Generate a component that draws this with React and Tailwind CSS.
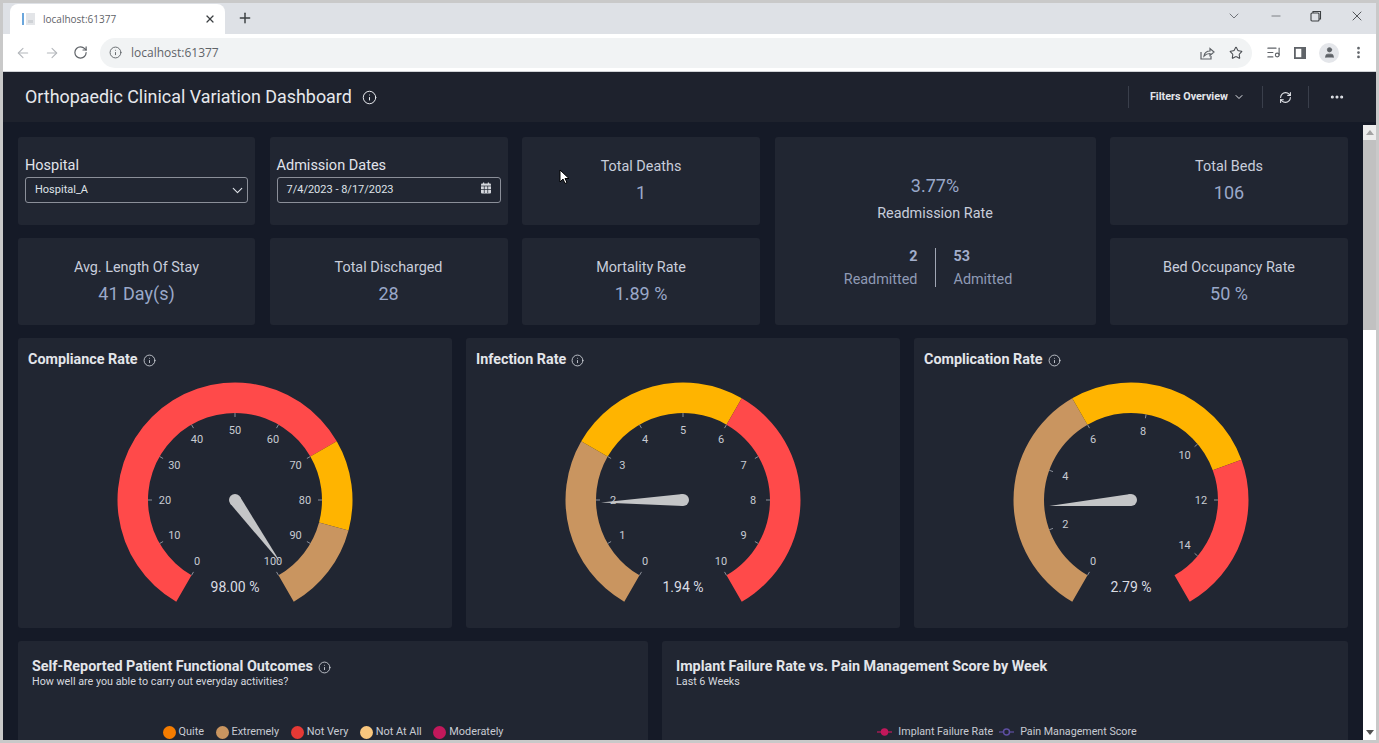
import React from "react";
import {
  ArrowLeft,
  ArrowRight,
  ChevronDown,
  Info,
  ListMusic,
  Minus,
  MoreHorizontal,
  MoreVertical,
  Plus,
  RefreshCw,
  RotateCw,
  Star,
  User,
  X,
} from "lucide-react";

const RED = "#ff4a4a";
const YELLOW = "#ffb400";
const TAN = "#c99560";

const polar = (r, deg) => {
  const a = (deg * Math.PI) / 180;
  return [130 + r * Math.cos(a), 130 - r * Math.sin(a)];
};

const arcPath = (from, to, ro, ri) => {
  const [x1, y1] = polar(ro, from);
  const [x2, y2] = polar(ro, to);
  const [x3, y3] = polar(ri, to);
  const [x4, y4] = polar(ri, from);
  const large = from - to > 180 ? 1 : 0;
  return `M${x1} ${y1}A${ro} ${ro} 0 ${large} 1 ${x2} ${y2}L${x3} ${y3}A${ri} ${ri} 0 ${large} 0 ${x4} ${y4}Z`;
};

// labels sitting 30deg off the vertical are pushed out a little in the original chart
const labelNudge = (deg) => {
  const c = Math.cos((deg * Math.PI) / 180);
  return Math.abs(Math.abs(c) - 0.5) < 0.01 ? Math.sign(c) * 3 : 0;
};

const Gauge = ({ max, step, segments, value, label, needle }) => {
  const angle = (v) => 240 - (300 * v) / max;
  const ticks = [];
  for (let v = 0; v <= max; v += step) ticks.push(v);
  const a = angle(value);
  const [tx, ty] = polar(needle, a);
  const [b1x, b1y] = polar(6, a + 90);
  const [b2x, b2y] = polar(6, a - 90);
  return (
    <svg width="260" height="240" viewBox="0 0 260 240" className="block">
      {segments.map((s) => (
        <path key={s.from} d={arcPath(angle(s.from), angle(s.to), 117.5, 87)} fill={s.color} />
      ))}
      {ticks.map((v) => {
        const [x1, y1] = polar(87, angle(v));
        const [x2, y2] = polar(83, angle(v));
        const [lx, ly] = polar(70, angle(v));
        return (
          <g key={v}>
            <line x1={x1} y1={y1} x2={x2} y2={y2} stroke="#8a8e98" strokeWidth="1" />
            <text x={lx + labelNudge(angle(v))} y={ly + 4} textAnchor="middle" fontSize="11" fill="#c8cbd2">
              {v}
            </text>
          </g>
        );
      })}
      <path d={`M${b1x} ${b1y}L${tx} ${ty}L${b2x} ${b2y}Z`} fill="#c4c5c7" />
      <circle cx="130" cy="130" r="6" fill="#c4c5c7" />
      <text x="130" y="222" textAnchor="middle" fontSize="14" fill="#d9dce3">
        {label}
      </text>
    </svg>
  );
};

const Stat = ({ label, value }) => (
  <div className="flex flex-col items-center justify-center gap-[3px] rounded-[3px] bg-[#212632] pt-px">
    <div className="text-[14.4px] leading-5 text-[#c8cddb]">{label}</div>
    <div className="text-[18px] leading-[26px] text-[#9aa8c9]">{value}</div>
  </div>
);

const GaugeCard = ({ title, ...gauge }) => (
  <div className="h-[290px] rounded-[3px] bg-[#212632] pt-[12px]">
    <div className="flex items-center gap-[5px] pl-[10px] text-[14.35px] leading-5 font-bold text-[#e3e5ea]">
      {title}
      <Info size={13} strokeWidth={1.6} className="text-[#d0d3da]" />
    </div>
    <div className="flex justify-center">
      <Gauge {...gauge} />
    </div>
  </div>
);

const LegendDot = ({ color, label }) => (
  <div className="flex items-center gap-[3px]">
    <span className="h-[13px] w-[13px] rounded-full" style={{ backgroundColor: color }} />
    <span>{label}</span>
  </div>
);

const LegendLine = ({ color, label, filled }) => (
  <div className="flex items-center gap-[6px]">
    <svg width="15" height="8" viewBox="0 0 15 8">
      <line x1="0" y1="4" x2="15" y2="4" stroke={color} strokeWidth="1.2" />
      <circle cx="7.5" cy="4" r="3" fill={filled ? color : "#212632"} stroke={color} strokeWidth="1.5" />
    </svg>
    <span>{label}</span>
  </div>
);

const ChromeBar = () => (
  <div className="shrink-0 font-['Open_Sans',sans-serif] text-[#5f6368]">
    <div className="flex h-[31px] items-end bg-[#dee1e6]">
      <div className="ml-[7px] flex h-[30px] w-[215px] items-center rounded-t-[8px] bg-white pr-[9px] pl-[12px]">
        <svg width="14" height="14" viewBox="0 0 14 14">
          <rect x="0" y="1" width="2" height="12" fill="#6aa6dc" />
          <rect x="4" y="1" width="9" height="12" fill="#e3e5e8" />
          <rect x="6" y="8" width="5" height="3" fill="#cfd2d6" />
        </svg>
        <span className="ml-[7px] flex-1 text-[10px]">localhost:61377</span>
        <X size={12} strokeWidth={2.4} className="text-[#3c4043]" />
      </div>
      <Plus size={16} strokeWidth={2.2} className="mb-[8px] ml-[12px] text-[#3c4043]" />
      <div className="mb-[10px] ml-auto flex items-center gap-[27px] pr-[11px]">
        <ChevronDown size={16} strokeWidth={1.3} />
        <Minus size={14} strokeWidth={1.3} />
        <svg width="12" height="12" viewBox="0 0 12 12" fill="none" stroke="#3c4043" strokeWidth="1.1">
          <rect x="1" y="3" width="8" height="8" rx="1" />
          <path d="M3 3V1.5h7.5V9H9" />
        </svg>
        <X size={16} strokeWidth={1.3} className="text-[#3c4043]" />
      </div>
    </div>
    <div className="flex h-[38px] items-center border-b border-[#d0d2d6] bg-white">
      <div className="flex items-center gap-[13px] pl-[12px]">
        <ArrowLeft size={16} strokeWidth={1.6} className="text-[#b4b7bc]" />
        <ArrowRight size={16} strokeWidth={1.6} className="text-[#b4b7bc]" />
        <RotateCw size={15} strokeWidth={1.9} />
      </div>
      <div className="ml-[12px] flex h-[30px] flex-1 items-center rounded-full bg-[#f1f3f4] pr-[9px] pl-[9px]">
        <Info size={13} strokeWidth={1.7} />
        <span className="ml-[9px] flex-1 text-[12px]">localhost:61377</span>
        <svg width="16" height="16" viewBox="0 0 16 16" fill="none" stroke="#5f6368" strokeWidth="1.2">
          <path d="M2 7v7h10v-3" />
          <path d="M5 11c.5-3 3-5 6-5V3.5L15 7l-4 3.5V8.5c-2.500 0-4.500 1-6 2.500z" />
        </svg>
        <Star size={14} strokeWidth={1.8} className="ml-[14px] text-[#4a4d52]" />
      </div>
      <div className="flex items-center gap-[12px] pr-[10px] pl-[14px]">
        <ListMusic size={15} strokeWidth={1.8} />
        <svg width="14" height="14" viewBox="0 0 14 14">
          <rect x="1" y="1" width="12" height="12" fill="#5f6368" />
          <rect x="2.800" y="2.800" width="5.500" height="8.400" fill="white" />
        </svg>
        <span className="flex h-[20px] w-[20px] items-center justify-center rounded-full bg-[#e4e6ea]">
          <User size={13} fill="#5f6368" strokeWidth={1.5} />
        </span>
        <MoreVertical size={15} strokeWidth={2.4} />
      </div>
    </div>
  </div>
);

const Scrollbar = () => (
  <div className="mt-[3px] flex w-[13px] shrink-0 flex-col bg-white">
    <div className="flex h-[15px] items-center justify-center bg-[#ededed]">
      <div className="h-0 w-0 border-x-[4px] border-b-[5px] border-x-transparent border-b-[#a3a3a3]" />
    </div>
    <div className="h-[190px] bg-[#c1c1c1]" />
    <div className="flex-1" />
    <div className="flex h-[15px] items-center justify-center">
      <div className="h-0 w-0 border-x-[4px] border-t-[5px] border-x-transparent border-t-[#505050]" />
    </div>
  </div>
);

const CalendarIcon = () => (
  <svg width="12" height="12" viewBox="0 0 12 12" className="mb-[4px]">
    <rect x="1" y="1.500" width="10" height="10" rx="1" fill="#d4d7dd" />
    <rect x="3" y="0.500" width="1.200" height="2" fill="#d4d7dd" />
    <rect x="7.800" y="0.500" width="1.200" height="2" fill="#d4d7dd" />
    <path d="M1 4h10M4.300 4v7M7.700 4v7M1 7.500h10" stroke="#212632" strokeWidth="0.7" />
  </svg>
);

export default function App() {
  return (
    <div className="flex h-[743px] w-[1379px] flex-col overflow-hidden bg-[#c9c9c9] px-[3px] pt-[3px] pb-[3px] font-['Roboto',sans-serif]">
      <ChromeBar />

      <div className="flex h-[50px] shrink-0 items-center bg-[#1e222d] pl-[22px]">
        <h1 className="text-[17.9px] text-[#e6e8ec]">Orthopaedic Clinical Variation Dashboard</h1>
        <Info size={15} strokeWidth={1.6} className="ml-[10px] text-[#e6e8ec]" />
        <div className="ml-auto flex h-[22px] items-center text-[#e3e5ea]">
          <div className="flex h-full items-center gap-[5px] border-l border-[#3a3f4b] pr-[17px] pl-[21px] text-[10.8px] font-bold">
            Filters Overview
            <ChevronDown size={12} strokeWidth={2} />
          </div>
          <div className="flex h-full w-[47px] items-center justify-center border-x border-[#3a3f4b]">
            <RefreshCw size={13} strokeWidth={2} />
          </div>
          <div className="flex h-full w-[55px] items-center justify-center">
            <MoreHorizontal size={16} strokeWidth={2.6} />
          </div>
        </div>
        <div className="w-[12px]" />
      </div>

      <div className="flex min-h-0 flex-1 bg-[#151a27]">
        <div className="min-w-0 flex-1 overflow-hidden pt-[15px] pl-[15px]">
          <div className="relative grid grid-cols-[237px_238px_238px_321px_238px] grid-rows-[88px_87px] gap-x-[14.5px] gap-y-[13px]">
            <div className="rounded-[3px] bg-[#212632] px-[7px] pt-[18.500px]">
              <div className="text-[14.5px] leading-5 text-[#e0e3ea]">Hospital</div>
              <div className="mt-[1.500px] flex h-[26px] items-center justify-between rounded-[3px] border border-[#8b8f99] pr-px pl-[9px] text-[11px] text-[#dfe2e8]">
                Hospital_A
                <ChevronDown size={17} strokeWidth={1.6} />
              </div>
            </div>
            <div className="rounded-[3px] bg-[#212632] px-[7px] pt-[18.500px]">
              <div className="text-[14.5px] leading-5 text-[#e0e3ea]">Admission Dates</div>
              <div className="mt-[1.500px] flex h-[26px] items-center justify-between rounded-[3px] border border-[#8b8f99] pr-[8px] pl-[9px] text-[11px] text-[#dfe2e8]">
                7/4/2023 - 8/17/2023
                <CalendarIcon />
              </div>
            </div>
            <Stat label="Total Deaths" value="1" />
            <div className="row-span-2 flex flex-col items-center rounded-[3px] bg-[#212632] pt-[36px]">
              <div className="text-[18px] leading-[26px] text-[#9aa8c9]">3.77%</div>
              <div className="mt-[5px] text-[14.4px] leading-5 text-[#c8cddb]">Readmission Rate</div>
              <div className="mt-[21px] flex w-full">
                <div className="flex w-[143px] flex-col items-end text-[14.4px] leading-[23px]">
                  <span className="font-bold text-[#a3aecb]">2</span>
                  <span className="text-[#8f9ab5]">Readmitted</span>
                </div>
                <div className="mx-[17.500px] mt-[3px] h-[39px] w-px bg-[#a0a6b4]" />
                <div className="flex flex-col text-[14.4px] leading-[23px]">
                  <span className="font-bold text-[#a3aecb]">53</span>
                  <span className="text-[#8f9ab5]">Admitted</span>
                </div>
              </div>
            </div>
            <Stat label="Total Beds" value="106" />
            <Stat label="Avg. Length Of Stay" value="41 Day(s)" />
            <Stat label="Total Discharged" value="28" />
            <Stat label="Mortality Rate" value="1.89 %" />
            <Stat label="Bed Occupancy Rate" value="50 %" />

            {/* mouse pointer from the recording */}
            <svg width="11" height="16" viewBox="0 0 11 16" className="absolute top-[32px] left-[541px]">
              <path d="M1 1v12l3-3 2 4.500 2-1-2-4h4z" fill="white" stroke="black" strokeWidth="1" />
            </svg>
          </div>

          <div className="mt-[13px] grid w-[1330px] grid-cols-3 gap-x-[14px]">
            <GaugeCard
              title="Compliance Rate"
              max={100}
              step={10}
              value={98}
              label="98.00 %"
              needle={78}
              segments={[
                { from: 0, to: 70, color: RED },
                { from: 70, to: 85, color: YELLOW },
                { from: 85, to: 100, color: TAN },
              ]}
            />
            <GaugeCard
              title="Infection Rate"
              max={10}
              step={1}
              value={1.94}
              label="1.94 %"
              needle={82}
              segments={[
                { from: 0, to: 3, color: TAN },
                { from: 3, to: 6, color: YELLOW },
                { from: 6, to: 10, color: RED },
              ]}
            />
            <GaugeCard
              title="Complication Rate"
              max={15}
              step={2}
              value={2.79}
              label="2.79 %"
              needle={82}
              segments={[
                { from: 0, to: 6, color: TAN },
                { from: 6, to: 11, color: YELLOW },
                { from: 11, to: 15, color: RED },
              ]}
            />
          </div>

          <div className="mt-[13px] grid h-[300px] w-[1330px] grid-cols-[630px_686px] gap-x-[14px]">
            <div className="rounded-[3px] bg-[#212632] pt-[17px]">
              <div className="flex items-center gap-[5px] pl-[14px] text-[14.35px] leading-[18px] font-bold text-[#e3e5ea]">
                Self-Reported Patient Functional Outcomes
                <Info size={13} strokeWidth={1.6} className="text-[#d0d3da]" />
              </div>
              <div className="pl-[14px] text-[10.75px] leading-[12px] text-[#d5d8df]">
                How well are you able to carry out everyday activities?
              </div>
              <div className="mt-[36px] flex justify-center gap-[11.500px] text-[10.9px] leading-4 text-[#c8cbd3]">
                <LegendDot color="#f57c00" label="Quite" />
                <LegendDot color="#c99560" label="Extremely" />
                <LegendDot color="#e53935" label="Not Very" />
                <LegendDot color="#f9c77e" label="Not At All" />
                <LegendDot color="#c2185b" label="Moderately" />
              </div>
            </div>
            <div className="rounded-[3px] bg-[#212632] pt-[17px]">
              <div className="pl-[14px] text-[14.35px] leading-[18px] font-bold text-[#e3e5ea]">
                Implant Failure Rate vs. Pain Management Score by Week
              </div>
              <div className="pl-[14px] text-[10.75px] leading-[12px] text-[#d5d8df]">Last 6 Weeks</div>
              <div className="mt-[36px] flex justify-center gap-[6px] pl-[4px] text-[10.7px] leading-4 text-[#c8cbd3]">
                <LegendLine color="#c2185b" label="Implant Failure Rate" filled />
                <LegendLine color="#5e4fa2" label="Pain Management Score" />
              </div>
            </div>
          </div>
        </div>
        <Scrollbar />
      </div>
    </div>
  );
}
